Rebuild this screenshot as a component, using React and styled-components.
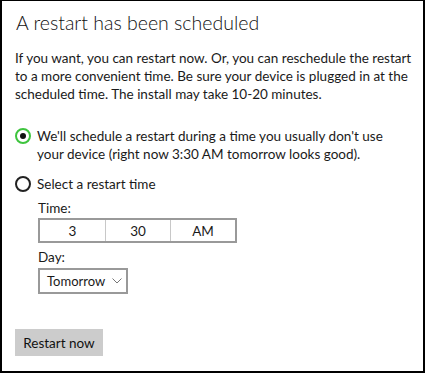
import styled, { createGlobalStyle } from "styled-components";

const GlobalStyle = createGlobalStyle`
  html, body {
    margin: 0;
    padding: 0;
    background: #fff;
  }
  body {
    font-family: Lato, "Open Sans", sans-serif;
    color: #1a1a1a;
  }
`;

const Frame = styled.div`
  box-sizing: border-box;
  width: 425px;
  height: 373px;
  border-style: solid;
  border-color: #000;
  border-width: 1px 2px 2px 2px;
  padding: 8px 0 0 13px;
  display: flex;
  flex-direction: column;
`;

const Title = styled.h1`
  margin: 0 0 0 1px;
  font-size: 19.5px;
  font-weight: 300;
  line-height: 28px;
  color: #111;
`;

const Body = styled.p`
  margin: 12px 0 0;
  font-size: 13.5px;
  line-height: 18px;
`;

const Options = styled.div`
  margin-top: 24px;
  display: flex;
  flex-direction: column;
  gap: 12px;
`;

const Option = styled.label`
  display: flex;
  align-items: flex-start;
  gap: 6px;
  font-size: 13.5px;
  line-height: 18px;
`;

const Radio = styled.span`
  box-sizing: border-box;
  flex: none;
  width: 16px;
  height: 16px;
  margin-top: 1px;
  border-radius: 50%;
  border: 2px solid ${(p) => (p.$checked ? "#3ec43e" : "#222")};
  display: flex;
  align-items: center;
  justify-content: center;

  &::after {
    content: "";
    width: 6px;
    height: 6px;
    border-radius: 50%;
    background: #111;
    display: ${(p) => (p.$checked ? "block" : "none")};
  }
`;

const Schedule = styled.div`
  margin: 7px 0 0 23px;
  display: flex;
  flex-direction: column;
  font-size: 13.5px;
`;

const FieldLabel = styled.div`
  line-height: 16px;
  margin-bottom: ${(p) => p.$gap}px;
`;

const TimePicker = styled.div`
  box-sizing: border-box;
  width: 199px;
  height: 25px;
  border: 2px solid #999;
  display: grid;
  grid-template-columns: 1fr 1fr 1fr;
  margin-bottom: 6px;
`;

const TimeCell = styled.div`
  display: flex;
  align-items: center;
  justify-content: center;
  & + & {
    border-left: 1px solid #c8c8c8;
  }
`;

const Select = styled.div`
  box-sizing: border-box;
  width: 90px;
  height: 26px;
  border: 2px solid #999;
  display: flex;
  align-items: center;
  gap: 7px;
  padding: 0 0 0 7px;
  font-size: 13px;
`;

const Button = styled.button`
  margin-top: 35px;
  box-sizing: border-box;
  width: 88px;
  height: 27px;
  border: none;
  background: #cccccc;
  font-family: inherit;
  font-size: 13.5px;
  color: #111;
  padding: 0;
`;

function Chevron() {
  return (
    <svg width="10" height="6" viewBox="0 0 10 6" fill="none">
      <path d="M0.5 0.5 L5 5 L9.5 0.5" stroke="#666" strokeWidth="0.9" />
    </svg>
  );
}

export default function App() {
  return (
    <>
      <GlobalStyle />
      <Frame>
        <Title>A restart has been scheduled</Title>
        <Body>
          If you want, you can restart now. Or, you can reschedule the restart
          <br />
          to a more convenient time. Be sure your device is plugged in at the
          <br />
          scheduled time. The install may take 10-20 minutes.
        </Body>
        <Options>
          <Option>
            <Radio $checked />
            <span>
              We'll schedule a restart during a time you usually don't use
              <br />
              your device (right now 3:30 AM tomorrow looks good).
            </span>
          </Option>
          <Option>
            <Radio />
            <span>Select a restart time</span>
          </Option>
        </Options>
        <Schedule>
          <FieldLabel $gap={2}>Time:</FieldLabel>
          <TimePicker>
            <TimeCell>3</TimeCell>
            <TimeCell>30</TimeCell>
            <TimeCell>AM</TimeCell>
          </TimePicker>
          <FieldLabel $gap={3}>Day:</FieldLabel>
          <Select>
            <span>Tomorrow</span>
            <Chevron />
          </Select>
        </Schedule>
        <div>
          <Button>Restart now</Button>
        </div>
      </Frame>
    </>
  );
}
